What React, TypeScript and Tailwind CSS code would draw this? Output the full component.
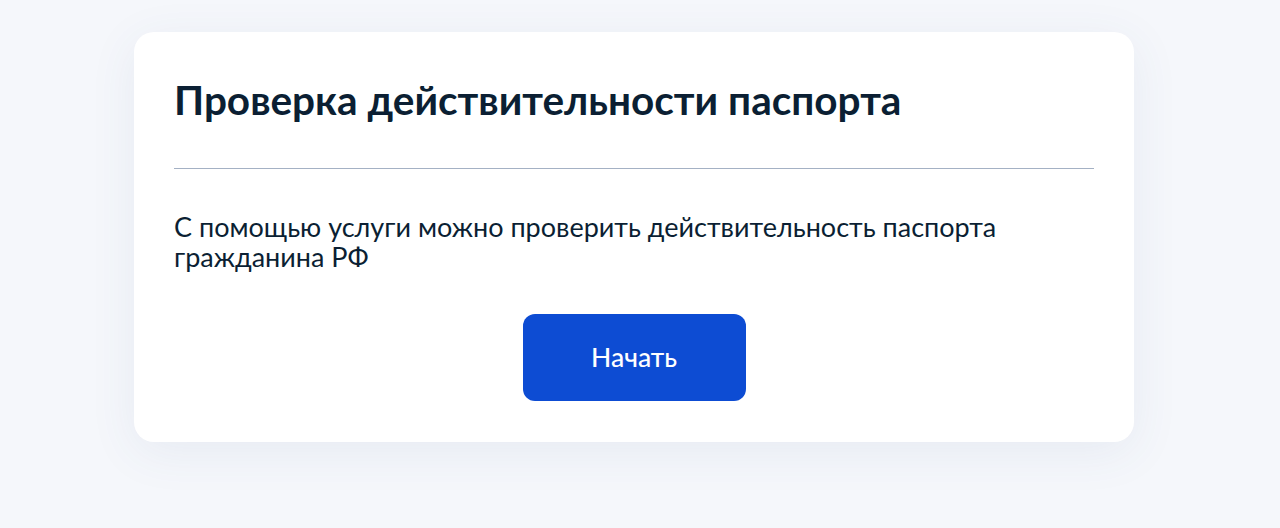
export default function App() {
  return (
    <div
      className="min-h-screen bg-[#f5f7fb] pt-8 pl-[134px]"
      style={{ fontFamily: "Lato, 'Noto Sans', sans-serif" }}
    >
      <div className="w-[1000px] rounded-[20px] bg-white px-10 pt-[44px] pb-[41px] shadow-[0_10px_48px_rgba(60,90,140,0.08)]">
        <h1 className="text-[40.5px] leading-[48px] font-bold text-[#0b1f33]">
          Проверка действительности паспорта
        </h1>
        <div className="mt-[44px] h-px bg-[#a4b1c4]" />
        <p className="mt-[43px] text-[27px] leading-[30px] text-[#0b1f33]">
          С помощью услуги можно проверить действительность паспорта гражданина РФ
        </p>
        <div className="mt-[42px] flex justify-center">
          <button className="w-[223px] h-[87px] rounded-xl bg-[#0d4cd3] text-white text-[26.5px] font-medium">
            Начать
          </button>
        </div>
      </div>
    </div>
  );
}
